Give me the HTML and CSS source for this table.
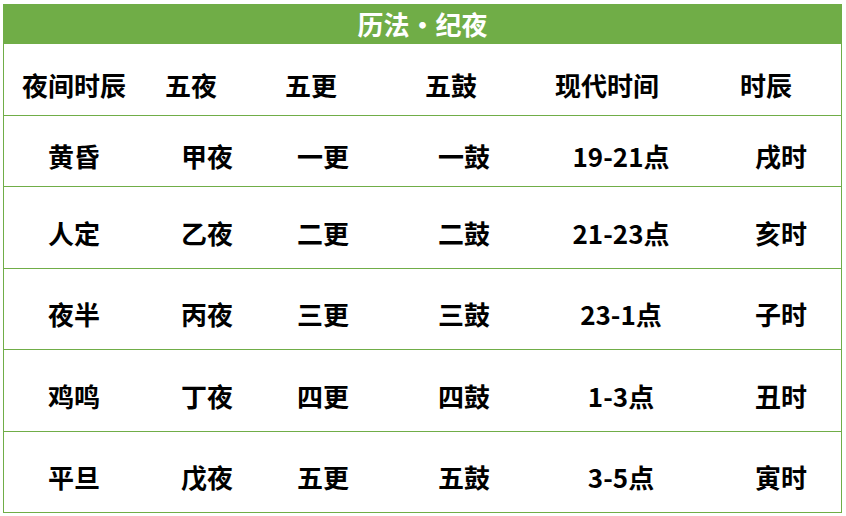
FILE: index.html
```html
<!DOCTYPE html>
<html lang="zh">
<head>
<meta charset="utf-8">
<link rel="stylesheet" href="styles.css">
</head>
<body>
<div class="sheet">
  <div class="title">历法·纪夜</div>
  <div class="body">
    <div class="row head r0">
      <div class="c">夜间时辰</div>
      <div class="c">五夜</div>
      <div class="c">五更</div>
      <div class="c">五鼓</div>
      <div class="c">现代时间</div>
      <div class="c">时辰</div>
    </div>
    <div class="row data r1">
      <div class="c">黄昏</div><div class="c">甲夜</div><div class="c">一更</div><div class="c">一鼓</div><div class="c">19-21点</div><div class="c last">戌时</div>
    </div>
    <div class="row data r2">
      <div class="c">人定</div><div class="c">乙夜</div><div class="c">二更</div><div class="c">二鼓</div><div class="c">21-23点</div><div class="c last">亥时</div>
    </div>
    <div class="row data r3">
      <div class="c">夜半</div><div class="c">丙夜</div><div class="c">三更</div><div class="c">三鼓</div><div class="c">23-1点</div><div class="c last">子时</div>
    </div>
    <div class="row data r4">
      <div class="c">鸡鸣</div><div class="c">丁夜</div><div class="c">四更</div><div class="c">四鼓</div><div class="c">1-3点</div><div class="c last">丑时</div>
    </div>
    <div class="row data r5">
      <div class="c">平旦</div><div class="c">戊夜</div><div class="c">五更</div><div class="c">五鼓</div><div class="c">3-5点</div><div class="c last">寅时</div>
    </div>
  </div>
</div>
</body>
</html>
```

FILE: styles.css
```css
html, body {
  margin: 0;
  padding: 0;
  background: #ffffff;
}
body {
  font-family: "Noto Sans CJK SC", "Noto Sans", sans-serif;
  font-weight: 700;
  color: #000000;
}
.sheet {
  width: 839px;
  margin: 4px 0 0 3px;
}
.title {
  height: 40px;
  background: #70ad47;
  color: #ffffff;
  font-size: 26px;
  line-height: 40px;
  text-align: center;
}
.body {
  border-left: 1px solid #70ad47;
  border-right: 1px solid #70ad47;
}
.row {
  display: grid;
  align-items: center;
  border-bottom: 1px solid #70ad47;
  font-size: 26px;
  line-height: 30px;
  padding-top: 10px;
  box-sizing: border-box;
}
.c {
  text-align: center;
  white-space: nowrap;
}
.head {
  grid-template-columns: 140px 94px 146px 134px 178px 140px;
  height: 72px;
}
.data {
  grid-template-columns: 140px 126px 106px 176px 138px 151px;
}
.data .last {
  padding-left: 31px;
}
.r1 { height: 71px; }
.r2 { height: 82px; }
.r3 { height: 81px; }
.r4 { height: 82px; }
.r5 { height: 81px; }
```
